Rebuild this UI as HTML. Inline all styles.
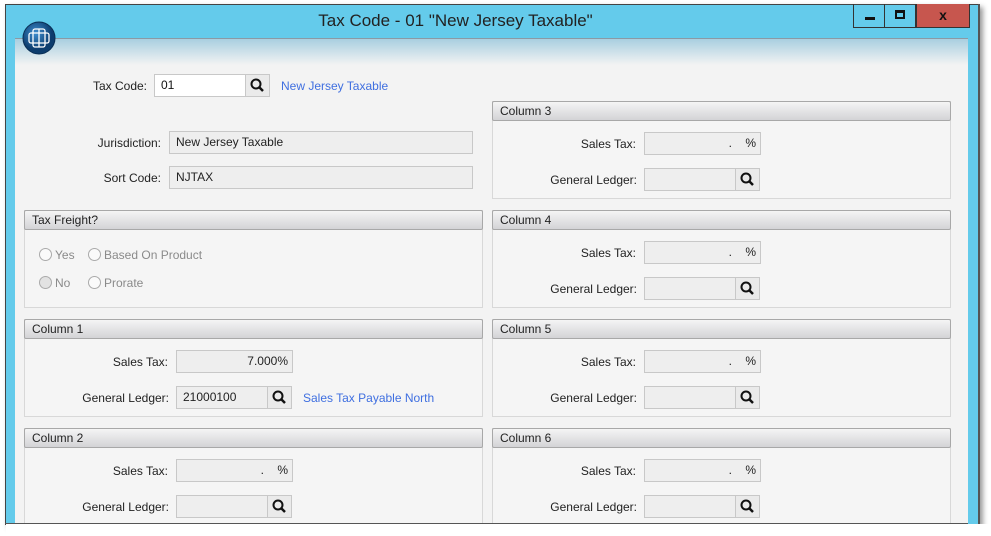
<!DOCTYPE html>
<html><head><style>
*{margin:0;padding:0;box-sizing:border-box}
body{width:991px;height:536px;background:#fff;position:relative;overflow:hidden;font-family:"Liberation Sans",sans-serif;font-size:12px;color:#222}
.a{position:absolute;white-space:nowrap}
.win{left:5px;top:4px;width:975px;height:521px;background:#64cbeb;border:1px solid #444;box-shadow:3px 3px 5px #999}
.content{left:15px;top:38px;width:953px;height:486px;background:#f3f3f3;border-top:1px solid #8a9aa5;overflow:hidden}
.grad{left:0;top:0;width:953px;height:26px;background:linear-gradient(#a9cfe0,#f3f3f3)}
.lbl{text-align:right}
.inp{border:1px solid #c8c8c8;background:#eeeeee;height:23px;line-height:21px;padding:0 6px}
.btn{border:1px solid #c8c8c8;background:#eaeaea;height:23px;width:25px}
.link{color:#3f6fe0}
.hdr{height:20px;background:linear-gradient(#f5f5f5,#d3d3d6);border:1px solid #a8a8a8;border-radius:2px;padding-left:7px;line-height:18px}
.box{border:1px solid #d8d8d8;background:#f5f5f5}
.rad{width:13px;height:13px;border:1px solid #aaa;border-radius:50%;background:#fafafa}
.gray{color:#8a8a8a}
</style></head><body>
<div class="a win"></div>
<div class="a" style="left:0;top:5px;width:991px;text-align:center;font-size:17px;line-height:32px;color:#222;padding-right:80px">Tax Code - 01 "New Jersey Taxable"</div>
<div class="a" style="left:853px;top:4px;width:32px;height:24px;border:1px solid #333;border-top:none"><div class="a" style="left:11px;top:13px;width:10px;height:3px;background:#111"></div></div>
<div class="a" style="left:885px;top:4px;width:31px;height:24px;border:1px solid #333;border-top:none;border-left:none"><div class="a" style="left:10px;top:6px;width:10px;height:9px;border:2px solid #111;border-top-width:3px"></div></div>
<div class="a" style="left:916px;top:4px;width:54px;height:24px;background:#c7564e;border:1px solid #333;border-top:none;color:#111;font-weight:bold;text-align:center;line-height:22px;font-size:14px">x</div>
<div class="a content">
<div class="a grad"></div>
</div>
<svg class="a" style="left:19px;top:20px;z-index:2" width="40" height="36" viewBox="0 0 40 36"><defs><radialGradient id="g" cx="40%" cy="35%"><stop offset="0" stop-color="#3f8ed0"/><stop offset="1" stop-color="#0d3d6e"/></radialGradient></defs><circle cx="20" cy="18" r="16" fill="url(#g)" stroke="#0a2f55"/><g fill="none" stroke="#fff" stroke-width="1.3"><rect x="14" y="9" width="12" height="18" rx="2"/><rect x="10" y="13" width="20" height="10" rx="2"/><line x1="20" y1="9" x2="20" y2="27"/></g></svg>
<div class="a" style="left:0;top:0">
<div class="a lbl" style="left:60px;width:87px;top:79px">Tax Code:</div>
<div class="a inp" style="left:154px;top:74px;width:92px;background:#fff;color:#111">01</div>
<div class="a btn" style="left:245px;top:74px"><svg width="23" height="21"><circle cx="10" cy="9" r="4.5" fill="none" stroke="#111" stroke-width="2"/><line x1="13" y1="12" x2="17" y2="16" stroke="#111" stroke-width="2.5"/></svg></div>
<div class="a link" style="left:281px;top:79px">New Jersey Taxable</div>
<div class="a lbl" style="left:60px;width:101px;top:136px">Jurisdiction:</div>
<div class="a inp" style="left:169px;top:131px;width:304px">New Jersey Taxable</div>
<div class="a lbl" style="left:60px;width:101px;top:171px">Sort Code:</div>
<div class="a inp" style="left:169px;top:166px;width:304px">NJTAX</div>

<div class="a box" style="left:24px;top:210px;width:459px;height:98px"></div>
<div class="a hdr" style="left:24px;top:210px;width:459px">Tax Freight?</div>
<div class="a rad" style="left:39px;top:248px"></div><div class="a gray" style="left:55px;top:248px">Yes</div>
<div class="a rad" style="left:88px;top:248px"></div><div class="a gray" style="left:104px;top:248px">Based On Product</div>
<div class="a rad" style="left:39px;top:276px;background:#e2e2e2"></div><div class="a gray" style="left:55px;top:276px">No</div>
<div class="a rad" style="left:88px;top:276px"></div><div class="a gray" style="left:104px;top:276px">Prorate</div>
</div>
<div id="p"></div>
<script>
function panel(x,t,name,sales,gl,link){
 var lx=x+152;var h='';
 h+='<div class="a box" style="left:'+x+'px;top:'+t+'px;width:459px;height:98px"></div>';
 h+='<div class="a hdr" style="left:'+x+'px;top:'+t+'px;width:459px">'+name+'</div>';
 h+='<div class="a lbl" style="left:'+(lx-120)+'px;width:'+(120-8)+'px;top:'+(t+36)+'px">Sales Tax:</div>';
 h+='<div class="a inp" style="left:'+lx+'px;top:'+(t+31)+'px;width:117px;text-align:right;padding-right:4px">'+sales+'</div>';
 h+='<div class="a lbl" style="left:'+(lx-150)+'px;width:'+(150-7)+'px;top:'+(t+72)+'px">General Ledger:</div>';
 h+='<div class="a inp" style="left:'+lx+'px;top:'+(t+67)+'px;width:92px">'+gl+'</div>';
 h+='<div class="a btn" style="left:'+(lx+91)+'px;top:'+(t+67)+'px"><svg width="23" height="21"><circle cx="10" cy="9" r="4.5" fill="none" stroke="#111" stroke-width="2"/><line x1="13" y1="12" x2="17" y2="16" stroke="#111" stroke-width="2.5"/></svg></div>';
 if(link)h+='<div class="a link" style="left:'+(lx+127)+'px;top:'+(t+72)+'px">'+link+'</div>';
 return h;}
var s='';
s+=panel(24,319,'Column 1','7.000%','21000100','Sales Tax Payable North');
s+=panel(24,428,'Column 2','.&nbsp;&nbsp;&nbsp;&nbsp;%','','');
s+=panel(492,101,'Column 3','.&nbsp;&nbsp;&nbsp;&nbsp;%','','');
s+=panel(492,210,'Column 4','.&nbsp;&nbsp;&nbsp;&nbsp;%','','');
s+=panel(492,319,'Column 5','.&nbsp;&nbsp;&nbsp;&nbsp;%','','');
s+=panel(492,428,'Column 6','.&nbsp;&nbsp;&nbsp;&nbsp;%','','');
document.getElementById('p').innerHTML=s;
</script>
<div class="a" style="left:6px;top:524px;width:985px;height:12px;background:#fff"></div>
<div class="a" style="left:5px;top:523px;width:975px;height:1px;background:#555"></div>
<div class="a" style="left:968px;top:38px;width:10px;height:486px;background:#64cbeb"></div>
<div class="a" style="left:978px;top:4px;width:2px;height:520px;background:#555"></div>
</body></html>
